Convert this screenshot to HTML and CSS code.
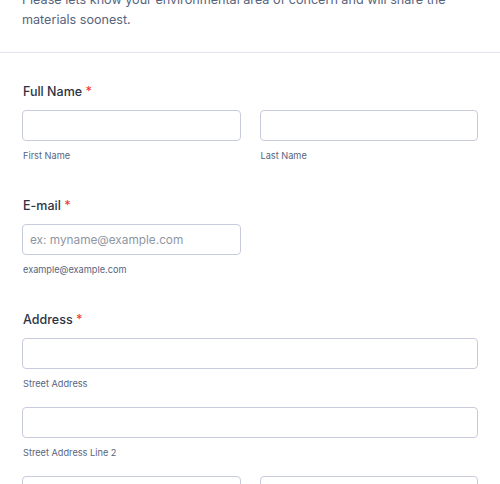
FILE: index.html
```html
<!DOCTYPE html>
<html lang="en">
<head>
    <meta charset="UTF-8">
    <meta name="viewport" content="width=device-width, initial-scale=1.0">
    <title>Environmental Concern Form</title>
    <link rel="stylesheet" href="styles.css">
</head>
<body>
    <div class="form-container">
        <div class="form-header">
            <p class="form-subheader">Please lets know your environmental area of concern and will share the materials soonest.</p>
        </div>
        <ul class="form-fields">
            <li class="form-line">
                <label class="form-label">Full Name <span class="required">*</span></label>
                <div class="input-row">
                    <div class="input-col">
                        <input type="text" class="form-input">
                        <span class="sublabel">First Name</span>
                    </div>
                    <div class="input-col">
                        <input type="text" class="form-input">
                        <span class="sublabel">Last Name</span>
                    </div>
                </div>
            </li>
            <li class="form-line">
                <label class="form-label">E-mail <span class="required">*</span></label>
                <div class="input-row">
                    <div class="input-col">
                        <input type="email" class="form-input" placeholder="ex: myname@example.com">
                        <span class="sublabel">example@example.com</span>
                    </div>
                    <div class="input-col"></div>
                </div>
            </li>
            <li class="form-line">
                <label class="form-label">Address <span class="required">*</span></label>
                <div class="address-rows">
                    <div class="input-col">
                        <input type="text" class="form-input">
                        <span class="sublabel">Street Address</span>
                    </div>
                    <div class="input-col">
                        <input type="text" class="form-input">
                        <span class="sublabel">Street Address Line 2</span>
                    </div>
                    <div class="input-row">
                        <div class="input-col">
                            <input type="text" class="form-input">
                        </div>
                        <div class="input-col">
                            <input type="text" class="form-input">
                        </div>
                    </div>
                </div>
            </li>
        </ul>
    </div>
</body>
</html>
```

FILE: styles.css
```css
* {
    margin: 0;
    padding: 0;
    box-sizing: border-box;
    font-family: Inter, "Noto Sans", sans-serif;
}

body {
    background-color: #fff;
    overflow: hidden;
}

.form-header {
    margin-top: -10px;
    padding: 0 22px 22px;
    border-bottom: 1px solid #e3e5f0;
}

.form-subheader {
    font-size: 12.6px;
    line-height: 20px;
    color: #57647e;
}

.form-fields {
    list-style: none;
    padding: 28px 22px 0;
}

.form-line {
    margin-bottom: 32px;
}

.form-label {
    display: block;
    font-size: 12.5px;
    font-weight: 500;
    line-height: 20px;
    color: #2c3345;
    padding: 1px 0 0 1px;
    margin-bottom: 8px;
}

.required {
    color: #f23a3c;
}

.input-row {
    display: flex;
    gap: 19px;
}

.input-col {
    flex: 1;
    display: flex;
    flex-direction: column;
}

.address-rows {
    display: flex;
    flex-direction: column;
    gap: 16px;
}

.form-input {
    width: 100%;
    height: 31px;
    border: 1px solid #c8cbdc;
    border-radius: 4px;
    padding: 0 7px;
    font-size: 11.8px;
    color: #2c3345;
    background: #fff;
}

.form-input::placeholder {
    color: #8f96a3;
}

.sublabel {
    font-size: 9.2px;
    line-height: 14px;
    color: #57647e;
    margin-top: 8px;
    padding-left: 1px;
}
```
